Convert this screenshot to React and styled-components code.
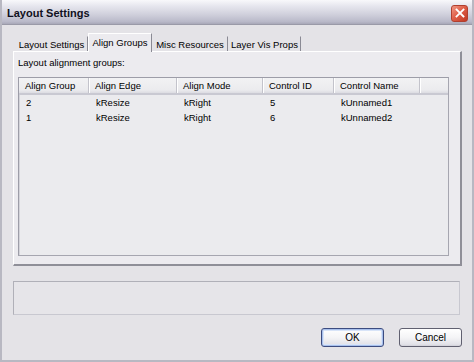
import styled, { createGlobalStyle } from "styled-components";

const GlobalStyle = createGlobalStyle`
  html, body {
    margin: 0;
    padding: 0;
    background: #ffffff;
  }
  body {
    font-family: "Liberation Sans", Arial, sans-serif;
    font-size: 9.5px;
    color: #000;
  }
`;

const columns = [
  { key: "group", title: "Align Group", width: 70 },
  { key: "edge", title: "Align Edge", width: 88 },
  { key: "mode", title: "Align Mode", width: 86 },
  { key: "id", title: "Control ID", width: 71 },
  { key: "name", title: "Control Name", width: 86 },
];

const rows = [
  { group: "2", edge: "kResize", mode: "kRight", id: "5", name: "kUnnamed1" },
  { group: "1", edge: "kResize", mode: "kRight", id: "6", name: "kUnnamed2" },
];

const tabs = [
  { label: "Layout Settings", width: 73 },
  { label: "Align Groups", width: 64 },
  { label: "Misc Resources", width: 76 },
  { label: "Layer Vis Props", width: 73 },
];

const App = () => {
  return (
    <>
      <GlobalStyle />
      <Window>
        <TitleBar>
          <Title>Layout Settings</Title>
          <CloseButton>
            <svg width="10" height="10" viewBox="0 0 10 10">
              <path d="M1.5 1.5 L8.5 8.5 M8.5 1.5 L1.5 8.5" stroke="#fff" strokeWidth="1.8" strokeLinecap="square" />
            </svg>
          </CloseButton>
        </TitleBar>
        <Body>
          <TabStrip>
            {tabs.map((t, i) => (
              <Tab key={t.label} $active={i === 1} $width={t.width}>{t.label}</Tab>
            ))}
          </TabStrip>
          <TabPanel>
            <Label>Layout alignment groups:</Label>
            <ListView>
              <HeaderRow>
                {columns.map((c) => (
                  <HeaderCell key={c.key} $width={c.width}>{c.title}</HeaderCell>
                ))}
                <HeaderCell $width={30} />
              </HeaderRow>
              {rows.map((r, i) => (
                <Row key={i}>
                  {columns.map((c) => (
                    <Cell key={c.key} $width={c.width}>{r[c.key]}</Cell>
                  ))}
                </Row>
              ))}
            </ListView>
          </TabPanel>
          <StatusBox />
          <ButtonRow>
            <Button $default>OK</Button>
            <Button>Cancel</Button>
          </ButtonRow>
        </Body>
      </Window>
    </>
  );
};

export default App;

const Window = styled.div`
  width: 474px;
  height: 362px;
  box-sizing: border-box;
  background: #e4e3e7;
  border-left: 2px solid #b8b8c2;
  border-right: 2px solid #b8b8c2;
  border-bottom: 2px solid #b8b8c2;
  overflow: hidden;
  display: flex;
  flex-direction: column;
`;

const TitleBar = styled.div`
  height: 25px;
  margin: 0 -2px;
  display: flex;
  align-items: center;
  justify-content: space-between;
  padding: 2px 6px 0 7px;
  background: linear-gradient(
    to bottom,
    #f8f8fb 0%,
    #e6e6ee 25%,
    #d0d0dc 60%,
    #b9b9c9 90%,
    #a8a8b8 100%
  );
  border-bottom: 1px solid #9a9aa8;
  box-sizing: border-box;
`;

const Title = styled.span`
  font-family: "Liberation Sans", Arial, sans-serif;
  font-weight: 700;
  font-size: 11px;
  color: #101020;
`;

const CloseButton = styled.div`
  width: 17px;
  height: 17px;
  border-radius: 3px;
  border: 1px solid #b04030;
  background: linear-gradient(135deg, #f09a88 0%, #e0604a 45%, #c03822 100%);
  display: flex;
  align-items: center;
  justify-content: center;
  box-sizing: border-box;
`;

const Body = styled.div`
  flex: 1;
  padding: 8px 10px 0 11px;
  display: flex;
  flex-direction: column;
`;

const TabStrip = styled.div`
  height: 18px;
  display: flex;
  align-items: flex-end;
  padding-left: 2px;
  position: relative;
  z-index: 1;
`;

const Tab = styled.div`
  width: ${(p) => p.$width}px;
  height: ${(p) => (p.$active ? "19px" : "15px")};
  margin-bottom: ${(p) => (p.$active ? "-1px" : "0")};
  display: flex;
  align-items: center;
  justify-content: center;
  box-sizing: border-box;
  padding-bottom: ${(p) => (p.$active ? "2px" : "0")};
  background: ${(p) => (p.$active ? "#ecebef" : "#e4e3e7")};
  border-top: 1px solid ${(p) => (p.$active ? "#ffffff" : "transparent")};
  border-left: 1px solid ${(p) => (p.$active ? "#ffffff" : "transparent")};
  border-right: 1px solid #8a8a94;
  white-space: nowrap;
`;

const TabPanel = styled.div`
  height: 215px;
  box-sizing: border-box;
  background: #ecebef;
  border-top: 1px solid #ffffff;
  border-left: 1px solid #ffffff;
  border-right: 2px solid #8f8f98;
  border-bottom: 2px solid #8f8f98;
  padding: 5px 0 0 4px;
  display: flex;
  flex-direction: column;
`;

const Label = styled.div`
  height: 12px;
  line-height: 12px;
  margin-bottom: 8px;
`;

const ListView = styled.div`
  width: 431px;
  height: 179px;
  box-sizing: border-box;
  background: #ebebee;
  border: 1px solid #a6a6b0;
  border-top-color: #9d9da8;
  border-left-color: #9d9da8;
  box-shadow: inset 1px 1px 0 #d4d4da;
  overflow: hidden;
`;

const HeaderRow = styled.div`
  display: flex;
  height: 17px;
  background: linear-gradient(to bottom, #f2f2f4 0%, #ebebee 80%, #dcdce2 100%);
  border-bottom: 2px solid #c9c9d2;
  box-sizing: border-box;
`;

const HeaderCell = styled.div`
  width: ${(p) => p.$width}px;
  box-sizing: border-box;
  padding-left: 6px;
  line-height: 16px;
  border-right: 1px solid #c3c3cb;
  box-shadow: 1px 0 0 #ffffff;
  white-space: nowrap;
  flex-shrink: 0;
`;

const Row = styled.div`
  display: flex;
  height: 15px;
  align-items: center;
  &:first-of-type {
    margin-top: 2px;
  }
`;

const Cell = styled.div`
  width: ${(p) => p.$width}px;
  box-sizing: border-box;
  padding-left: 7px;
  white-space: nowrap;
  flex-shrink: 0;
`;

const StatusBox = styled.div`
  margin-top: 15px;
  width: 447px;
  height: 34px;
  box-sizing: border-box;
  background: #e6e5e9;
  border: 1px solid #b0b0b8;
  border-right-color: #c8c8d0;
  border-bottom-color: #c8c8d0;
`;

const ButtonRow = styled.div`
  margin-top: 13px;
  width: 449px;
  display: flex;
  justify-content: flex-end;
  gap: 15px;
`;

const Button = styled.div`
  width: 63px;
  height: 19px;
  box-sizing: border-box;
  border-radius: 3px;
  border: 1px solid ${(p) => (p.$default ? "#3c4c80" : "#606070")};
  background: linear-gradient(to bottom, #ffffff 0%, #f4f4f6 50%, #e2e2e8 90%, #d0d0d8 100%);
  box-shadow: ${(p) => (p.$default ? "inset 0 0 0 1px #a8c0ec, inset 0 0 0 2px #d8e4f8" : "none")};
  display: flex;
  align-items: center;
  justify-content: center;
  font-size: 10px;
`;
